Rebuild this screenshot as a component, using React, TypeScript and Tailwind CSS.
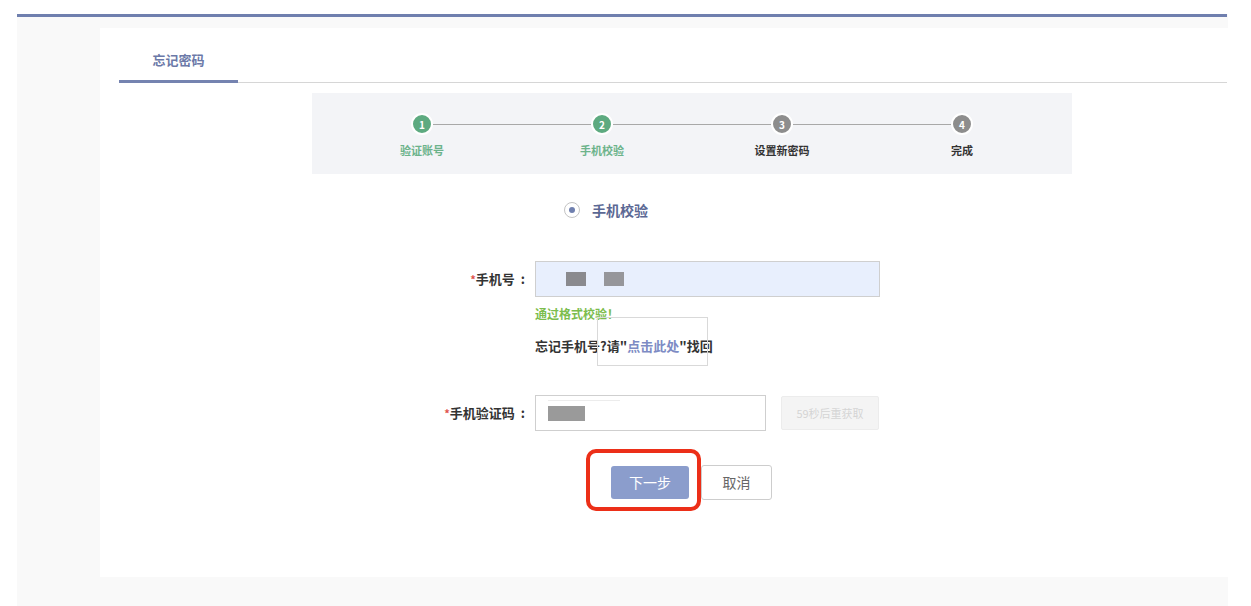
const font = { fontFamily: '"Noto Sans CJK SC", "Noto Sans", sans-serif' };

const steps = [
	{ n: 1, label: '验证账号', done: true },
	{ n: 2, label: '手机校验', done: true },
	{ n: 3, label: '设置新密码', done: false },
	{ n: 4, label: '完成', done: false },
];

const StepBar = () => {
	return (
		<div className="ml-[212px] mt-[10px] w-[760px] h-[81px] bg-[#f3f4f7] pt-[20px]">
			<div className="flex items-center pl-[99px]">
				{steps.map((s, i) => (
					<div key={s.n} className="flex items-center">
						<div
							className={`w-[22px] h-[22px] rounded-full border-2 border-white flex items-center justify-center text-[10px] font-bold text-white ${
								s.done ? 'bg-[#5daa80]' : 'bg-[#8d8d8d]'
							}`}
						>
							{s.n}
						</div>
						{i < steps.length - 1 && <div className="w-[158px] h-px bg-[#a8a8a8]" />}
					</div>
				))}
			</div>
			<div className="grid grid-cols-[repeat(4,180px)] pl-[20px] mt-[8px]">
				{steps.map((s) => (
					<div
						key={s.n}
						className={`text-center text-[11px] leading-[14px] font-bold ${
							s.done ? 'text-[#6cb38b]' : 'text-[#333]'
						}`}
					>
						{s.label}
					</div>
				))}
			</div>
		</div>
	);
};

const Label = ({ text }: { text: string }) => (
	<div className="w-[150px] pr-[5px] text-right text-[13px] font-bold text-[#333] leading-[18px]">
		<span className="text-[#e0524a] text-[11px] align-top">*</span>
		{text}
		<span className="ml-[6px]">:</span>
	</div>
);

const App = () => {
	return (
		<div className="w-full h-[606px] bg-white pt-[14px] overflow-hidden" style={font}>
			<div className="ml-[17px] w-[1211px] h-[592px] bg-[#f9f9f9]">
				<div className="w-[1210px] h-[3px] bg-[#6f7fae]" />
				<div className="ml-[83px] mt-[11px] h-[549px] bg-white">
					{/* tab header */}
					<div className="ml-[19px] mr-px flex border-b border-[#d6d6d6]">
						<div className="w-[119px] h-[55px] -mb-px border-b-[3px] border-[#7583b0] pt-[24px] text-center text-[13px] leading-[16px] font-bold text-[#6b79a8]">
							忘记密码
						</div>
					</div>

					<StepBar />

					{/* radio */}
					<div className="ml-[464px] mt-[26px] flex items-center gap-[12px] h-[20px]">
						<div className="w-[16px] h-[16px] rounded-full border border-[#c4c4c4] flex items-center justify-center">
							<div className="w-[6px] h-[6px] rounded-full bg-[#6f7fae]" />
						</div>
						<span className="text-[14px] leading-[20px] font-bold text-[#5b6894]">手机校验</span>
					</div>

					{/* phone */}
					<div className="ml-[280px] mt-[41px] flex items-center gap-[5px]">
						<Label text="手机号" />
						<div className="w-[345px] h-[36px] border border-[#cfcfcf] bg-[#e8effd] flex items-center pl-[30px] gap-[18px]">
							<div className="w-[20px] h-[14px] bg-[#8a8a8e]" />
							<div className="w-[20px] h-[14px] bg-[#96969a]" />
						</div>
					</div>
					<div className="ml-[435px] mt-[9px] text-[12px] leading-[16px] font-bold text-[#7cbd4e]">
						通过格式校验！
					</div>
					<div className="relative ml-[435px] mt-[15px] text-[13px] leading-[18px] font-bold text-[#333]">
						忘记手机号?请"<span className="text-[#7d8bc4]">点击此处</span>"找回
						<div className="absolute left-[62px] top-[-20px] w-[111px] h-[49px] border border-[#d9d9d9] pointer-events-none" />
					</div>

					{/* code */}
					<div className="ml-[280px] mt-[40px] flex items-center gap-[5px]">
						<Label text="手机验证码" />
						<div className="relative w-[231px] h-[36px] border border-[#cfcfcf] bg-white flex items-center pl-[12px]">
							<div className="absolute left-[12px] top-[4px] w-[72px] h-px bg-[#ececec]" />
							<div className="w-[37px] h-[15px] bg-[#9a9a9a]" />
						</div>
						<div className="ml-[10px] w-[98px] h-[34px] rounded-[2px] bg-[#f4f4f4] border border-[#ececec] flex items-center justify-center text-[11px] text-[#d4d4d4]">
							59秒后重获取
						</div>
					</div>

					{/* buttons */}
					<div className="relative ml-[511px] mt-[34px] flex items-center h-[35px]">
						<div className="absolute left-[-25px] top-[-16px] w-[115px] h-[62px] border-4 border-[#ec2f18] rounded-[10px]" />
						<button className="w-[78px] h-[33px] rounded-[3px] bg-[#8b9dcc] text-white text-[14px]">下一步</button>
						<button className="ml-[12px] w-[71px] h-[35px] rounded-[3px] border border-[#cdcdcd] bg-white text-[#666] text-[14px]">
							取消
						</button>
					</div>
				</div>
			</div>
		</div>
	);
};

export default App;
